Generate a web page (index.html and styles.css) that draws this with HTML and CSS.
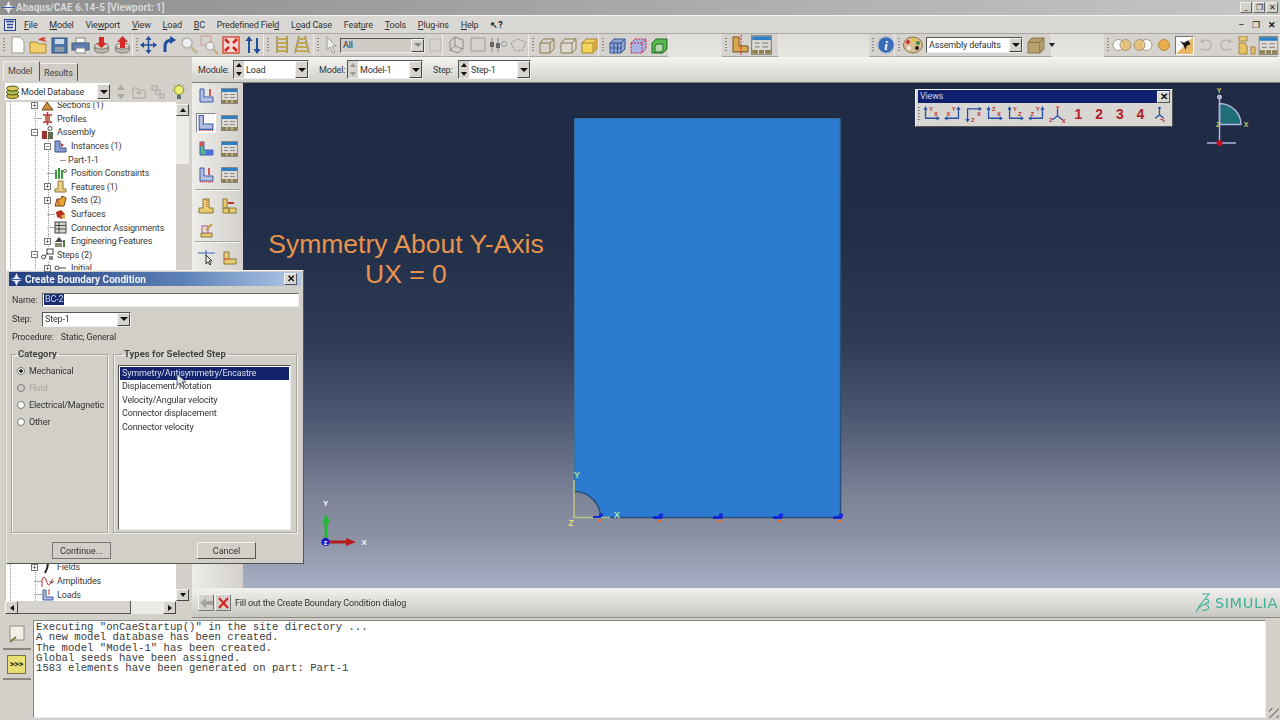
FILE: index.html
```html
<!DOCTYPE html>
<html lang="en">
<head>
    <meta charset="UTF-8">
    <title>Abaqus/CAE 6.14-5 [Viewport: 1]</title>
    <link rel="stylesheet" href="styles.css">
</head>
<body>
<svg class="defs" width="0" height="0">
    <symbol id="mgr" viewBox="0 0 17 16">
        <rect x=".5" y=".5" width="16" height="15" fill="#dcdad2" stroke="#8a887e"/>
        <rect x="1" y="1" width="15" height="3" fill="#2d7ec4"/>
        <path d="M3 6h4v1H3zM9 6h5v1H9zM3 9h4v1H3zM9 9h5v1H9z" fill="#8d8d8d"/>
        <path d="M1 12h15v3H1z" fill="#8c7f50"/>
        <path d="M6 12v3M11 12v3" stroke="#dcdad2"/>
    </symbol>
    <symbol id="lpart" viewBox="0 0 17 16">
        <path d="M2 1h4v8h9v5H2z" fill="#b4bfe0" stroke="#3b5da8"/>
    </symbol>
    <symbol id="cube" viewBox="0 0 17 17">
        <path d="M1 6l4-4h10v10l-4 4H1z M1 6h10v10 M11 6l4-4" fill="none" stroke="#8c7a4c"/>
    </symbol>
</svg>

<div class="app">
    <div class="titlebar">
        <svg class="title-icon" width="13" height="13" viewBox="0 0 13 13"><path d="M6.500 0l2 4.500 4.500 2-4.500 2-2 4.500-2-4.500-4.500-2 4.500-2z" fill="#e8e8f4"/><path d="M0 6.500h13" stroke="#3858a0"/></svg>
        <span class="title-text">Abaqus/CAE 6.14-5 [Viewport: 1]</span>
        <div class="win-btns">
            <span class="win-btn">_</span><span class="win-btn">&#10064;</span><span class="win-btn">&#10005;</span>
        </div>
    </div>

    <div class="menubar">
        <svg class="menu-icon" width="12" height="12" viewBox="0 0 12 12"><rect x=".5" y=".5" width="11" height="11" fill="#dfe4f4" stroke="#28448c"/><path d="M2 2.500h8M3 5.500h6M3 8.500h6" stroke="#28448c" stroke-width="1.500"/></svg>
        <nav class="menu-items">
            <span><u>F</u>ile</span><span><u>M</u>odel</span><span>Vie<u>w</u>port</span><span><u>V</u>iew</span><span><u>L</u>oad</span><span><u>B</u>C</span><span>Predefined Fiel<u>d</u></span><span>L<u>o</u>ad Case</span><span>Feat<u>u</u>re</span><span><u>T</u>ools</span><span><u>P</u>lug-ins</span><span><u>H</u>elp</span><span class="whatsthis">&#8598;?</span>
        </nav>
        <div class="mdi-btns"><span>&#8211;</span><span>&#10064;</span><b>&#10005;</b></div>
    </div>

    <div class="toolbars">
        <div class="tb tb-file">
            <i class="grip"></i>
            <svg width="21" height="20" viewBox="0 0 21 20"><path d="M5 2h8l4 4v12H5z" fill="#fcfcfa" stroke="#9a9a98"/></svg>
            <svg width="21" height="20" viewBox="0 0 21 20"><path d="M2 7h7l2 2h7v9H2z" fill="#f0cf6c" stroke="#a8883a"/><path d="M10 5q4-4 8-2l-2 1 3 3-4-1z" fill="#d8402c"/></svg>
            <svg width="21" height="20" viewBox="0 0 21 20"><rect x="3" y="3" width="15" height="15" fill="#4e78aa" stroke="#30507c"/><rect x="6" y="4" width="9" height="5" fill="#cfd8e6"/><rect x="6" y="12" width="9" height="5" fill="#8e9aa8"/></svg>
            <svg width="21" height="20" viewBox="0 0 21 20"><rect x="6" y="3" width="9" height="5" fill="#f4f4f4" stroke="#888"/><rect x="2" y="8" width="17" height="7" fill="#5a7fae" stroke="#4a5a78"/><rect x="6" y="13" width="9" height="5" fill="#fafafa" stroke="#888"/></svg>
            <svg width="21" height="20" viewBox="0 0 21 20"><ellipse cx="10.500" cy="15" rx="7" ry="3" fill="#bcb8ac" stroke="#85827a"/><path d="M3.500 11v4M17.500 11v4" stroke="#85827a"/><ellipse cx="10.500" cy="11" rx="7" ry="3" fill="#d4d0c8" stroke="#85827a"/><path d="M8 2h5v6h3l-5.500 5L5 8h3z" fill="#d42a2a"/></svg>
            <svg width="21" height="20" viewBox="0 0 21 20"><ellipse cx="10.500" cy="15" rx="7" ry="3" fill="#bcb8ac" stroke="#85827a"/><path d="M3.500 11v4M17.500 11v4" stroke="#85827a"/><ellipse cx="10.500" cy="11" rx="7" ry="3" fill="#d4d0c8" stroke="#85827a"/><path d="M8 13h5V7h3L10.500 1 5 7h3z" fill="#d42a2a"/></svg>
        </div>
        <div class="tb tb-view">
            <i class="grip"></i>
            <svg width="21" height="20" viewBox="0 0 21 20"><path d="M10.500 3v14M4 10h13" stroke="#1e4e9c" stroke-width="1.500"/><path d="M10.500 1l3 4h-6zM10.500 19l3-4h-6zM2 10l4-3v6zM19 10l-4-3v6z" fill="#1e4e9c"/></svg>
            <svg width="20" height="20" viewBox="0 0 20 20"><path d="M6 17V11q0-5 6-6" fill="none" stroke="#1e4e9c" stroke-width="3"/><path d="M11 1l6 4-6 4z" fill="#1e4e9c"/></svg>
            <svg width="20" height="20" viewBox="0 0 20 20"><circle cx="8" cy="8" r="5" fill="#eef0f4" stroke="#b4b4ae" stroke-width="1.500"/><path d="M12 12l6 6" stroke="#c0b48c" stroke-width="2.500"/></svg>
            <svg width="21" height="20" viewBox="0 0 21 20"><rect x="2" y="1" width="10" height="9" fill="none" stroke="#cf9a90"/><circle cx="11" cy="11" r="4" fill="#eef0f4" stroke="#b4b4ae" stroke-width="1.500"/><path d="M14 14l5 5" stroke="#c0b48c" stroke-width="2.500"/></svg>
            <svg width="23" height="20" viewBox="0 0 23 20"><rect x="3" y="2" width="16" height="16" fill="#f6d8d0" stroke="#d8503c" stroke-width="1.500"/><path d="M5 4l4 4M17 4l-4 4M5 16l4-4M17 16l-4-4" stroke="#d8261c" stroke-width="2.500"/></svg>
            <svg width="20" height="20" viewBox="0 0 20 20"><path d="M6 18V5M14 3v13" stroke="#1e4e9c" stroke-width="2"/><path d="M6 1l3.500 5h-7zM14 19l3.500-5h-7z" fill="#1e4e9c"/></svg>
        </div>
        <div class="tb tb-lad">
            <i class="grip"></i>
            <svg width="20" height="20" viewBox="0 0 20 20"><path d="M5 1v17M15 1v17" stroke="#9a8a50" stroke-width="1.500"/><path d="M5 4h10M5 8h10M5 12h10M5 16h10" stroke="#c0a850" stroke-width="2"/></svg>
            <svg width="20" height="20" viewBox="0 0 20 20"><path d="M7 1L3 18M13 1l4 17" stroke="#9a8a50" stroke-width="1.500"/><path d="M6 4h8M5 8h10M4 12h12M3 16h14" stroke="#c0a850" stroke-width="2"/></svg>
        </div>
        <div class="tb tb-select">
            <i class="grip"></i>
            <svg width="20" height="20" viewBox="0 0 20 20"><path d="M5 2v13l3-3 3 6 2-1-3-6h4z" fill="#eeeeea" stroke="#9c9c98"/></svg>
            <div class="combo combo-off"><span class="combo-field">All</span><span class="combo-arrow"></span></div>
            <svg class="shift" width="18" height="20" viewBox="0 0 18 20"><rect x="3" y="4" width="11" height="12" fill="none" stroke="#bbb"/></svg>
            <svg width="15" height="20" viewBox="0 0 15 20"><rect x="3" y="7" width="10" height="9" fill="#8a8a88"/></svg>
        </div>
        <div class="tb tb-sel2">
            <svg width="22" height="20" viewBox="0 0 22 20"><path d="M4 6l5-4 8 3v9l-5 4-8-3z M9 2v9l8 3M9 11l-5 4" fill="none" stroke="#8a8a88"/></svg>
            <svg width="20" height="20" viewBox="0 0 20 20"><path d="M3 3h14v13H3z" fill="none" stroke="#9c9c9a"/></svg>
            <svg width="20" height="20" viewBox="0 0 20 20"><path d="M4 3v14M10 3v14" stroke="#8a8a88"/><rect x="2" y="7" width="4" height="5" fill="#666"/><rect x="8" y="8" width="4" height="5" fill="#666"/><circle cx="16" cy="9" r="2.500" fill="none" stroke="#999"/></svg>
            <svg width="22" height="20" viewBox="0 0 22 20"><path d="M3 8l6-4 9 3-3 8-8 1z" fill="none" stroke="#9c9c9a" stroke-dasharray="3 1"/></svg>
        </div>
        <div class="tb tb-cube">
            <i class="grip"></i>
            <svg class="cube" viewBox="0 0 17 17"><use href="#cube"/></svg>
            <svg class="cube" viewBox="0 0 17 17"><path d="M1 6l4-4h11v10l-4 4H1z M1 6h11v10 M12 6l4-4" fill="#dedbd2" stroke="#8c7a4c"/></svg>
            <svg class="cube" viewBox="0 0 17 17"><path d="M1 6l4-4h11v10l-4 4H1z" fill="#f4d45c" stroke="#9c8432"/><path d="M1 6h11v10M12 6l4-4" fill="none" stroke="#9c8432"/><path d="M12 6l4-4v10l-4 4z" fill="#d8a83c"/></svg>
        </div>
        <div class="tb tb-mesh">
            <i class="grip"></i>
            <svg class="cube" viewBox="0 0 17 17"><path d="M1 6l4-4h11v10l-4 4H1z" fill="#8fa6d4" stroke="#34508c"/><path d="M1 6h11v10M12 6l4-4M5 6v10M8.500 6v10M1 11h11" fill="none" stroke="#34508c"/></svg>
            <svg class="cube" viewBox="0 0 17 17"><path d="M1 6l4-4h11v10l-4 4H1z" fill="#a8b6e4" stroke="#c8204c" stroke-dasharray="2 1"/><path d="M1 6h11v10M12 6l4-4" fill="none" stroke="#c8204c" stroke-dasharray="2 1"/></svg>
            <svg class="cube" viewBox="0 0 17 17"><path d="M1 6l4-4h11v10l-4 4H1z" fill="#56b84c" stroke="#2a6c2c"/><path d="M4 9l2-2h6v6l-2 2H4z" fill="#b4d8a8" stroke="#2a6c2c"/></svg>
        </div>
        <div class="tb tb-part">
            <i class="grip"></i>
            <svg width="21" height="20" viewBox="0 0 21 20"><path d="M3 2h6v9h9v6H3z" fill="#d8a84c" stroke="#6c5420"/><path d="M11 0v20" stroke="#d81c3c" stroke-dasharray="2 1"/></svg>
            <svg width="21" height="20" viewBox="0 0 17 16"><use href="#mgr"/></svg>
        </div>
        <div class="tb tb-info">
            <i class="grip"></i>
            <svg width="18" height="18" viewBox="0 0 18 18"><circle cx="9" cy="9" r="8" fill="#3c6cb8" stroke="#8ca8d4"/><text class="info-i" x="9" y="14" text-anchor="middle">i</text></svg>
        </div>
        <div class="tb tb-color">
            <i class="grip"></i>
            <svg width="20" height="18" viewBox="0 0 20 18"><ellipse cx="10" cy="9" rx="9.500" ry="8" fill="#d8bc94" stroke="#8c744c"/><circle cx="5" cy="6" r="2" fill="#d43030"/><circle cx="10" cy="4" r="2" fill="#e4c83c"/><circle cx="15" cy="7" r="2" fill="#3c8c3c"/><circle cx="14" cy="12" r="2" fill="#222"/><circle cx="6" cy="12" r="2" fill="#f0ece4"/></svg>
            <div class="combo combo-assembly"><span class="combo-field">Assembly defaults</span><span class="combo-arrow"></span></div>
            <svg class="cube-solid" width="18" height="18" viewBox="0 0 17 17"><path d="M1 6l4-4h11v10l-4 4H1z" fill="#b8a270" stroke="#8c7a4c"/><path d="M1 6h11v10M12 6l4-4" fill="none" stroke="#8c7a4c"/></svg>
            <i class="caret"></i>
        </div>
        <div class="tb tb-render">
            <i class="grip"></i>
            <svg class="r-wide" width="20" height="18" viewBox="0 0 20 18"><circle cx="6.500" cy="9" r="5.500" fill="#fafafa" stroke="#a89c7c"/><circle cx="13.500" cy="9" r="5.500" fill="#e8b860" fill-opacity=".7" stroke="#a89c7c"/></svg>
            <svg class="r-wide" width="20" height="18" viewBox="0 0 20 18"><circle cx="13.500" cy="9" r="5.500" fill="#fafafa" stroke="#a89c7c"/><circle cx="6.500" cy="9" r="5.500" fill="#e8b860" fill-opacity=".7" stroke="#a89c7c"/></svg>
            <svg width="20" height="18" viewBox="0 0 20 18"><circle cx="10" cy="9" r="5.500" fill="#e8ac4c" stroke="#b08c48"/></svg>
            <svg class="pin-active" width="19" height="19" viewBox="0 0 21 21"><rect width="21" height="21" fill="#fafafa"/><path d="M0 21L21 0v21z" fill="#e8b868"/><path d="M5 5l5 2 5-3 3 5-5 2-1 5-3-6z" fill="#181818"/></svg>
            <svg width="21" height="18" viewBox="0 0 21 18"><path d="M6 13q10 3 10-4t-9-4" fill="none" stroke="#b8b8b4" stroke-width="1.500"/><path d="M4 5l5-2v5z" fill="#b8b8b4"/></svg>
            <svg width="21" height="18" viewBox="0 0 21 18"><path d="M15 13Q5 16 5 9t9-4" fill="none" stroke="#b8b8b4" stroke-width="1.500"/><path d="M17 5l-5-2v5z" fill="#b8b8b4"/></svg>
            <svg width="21" height="19" viewBox="0 0 21 19"><rect x="2" y="0" width="8" height="5" fill="#e8c878" stroke="#a08844"/><path d="M2 7h6l2 3v8H2z" fill="#e8c060" stroke="#a08844"/><rect x="14" y="11" width="4" height="7" fill="#e8c060" stroke="#a08844"/></svg>
            <svg width="21" height="19" viewBox="0 0 17 16"><use href="#mgr"/></svg>
        </div>
    </div>

    <div class="middle">
        <aside class="sidebar">
            <div class="tabs">
                <span class="tab tab-active">Model</span><span class="tab">Results</span>
            </div>
            <div class="db-row">
                <div class="combo combo-db">
                    <svg width="13" height="14" viewBox="0 0 13 14"><ellipse cx="6.500" cy="11" rx="6" ry="2.500" fill="#d8b848" stroke="#4c4c20"/><ellipse cx="6.500" cy="7.500" rx="6" ry="2.500" fill="#a8c050" stroke="#4c4c20"/><ellipse cx="6.500" cy="3.500" rx="6" ry="2.500" fill="#d8c858" stroke="#4c4c20"/></svg>
                    <span class="combo-field">Model Database</span><span class="combo-arrow"></span>
                </div>
                <svg class="db-tool" width="12" height="16" viewBox="0 0 12 16"><path d="M6 1l4 5H2zM6 15l4-5H2z" fill="#aaa8a2"/></svg>
                <svg class="db-tool" width="14" height="14" viewBox="0 0 14 14"><path d="M1 3h4l1 2h7v8H1z" fill="none" stroke="#a8a69e"/><path d="M4 8h6M7 6v4" stroke="#a8a69e"/></svg>
                <svg class="db-tool" width="14" height="14" viewBox="0 0 14 14"><rect x="1" y="1" width="5" height="4" fill="none" stroke="#a8a69e"/><rect x="5" y="5" width="4" height="4" fill="none" stroke="#a8a69e"/><rect x="9" y="9" width="4" height="4" fill="none" stroke="#a8a69e"/></svg>
                <svg class="db-tool db-tip" width="14" height="16" viewBox="0 0 14 16"><circle cx="7" cy="6" r="4.500" fill="#eef070" stroke="#8c9030"/><rect x="5" y="11" width="4" height="4" fill="#5c6c78"/><path d="M0 6h1M13 6h1M7 0v1M2 1l1 1M12 1l-1 1" stroke="#8c9030"/></svg>
            </div>
            <div class="tree-box">
                <div class="tree">
                    <div class="row l1 first"><i class="exp">+</i><svg width="13" height="13" viewBox="0 0 13 13"><path d="M1 11l5-8 6 8z" fill="#c89040" stroke="#6c4820"/></svg><span>Sections (1)</span></div>
                    <div class="row l1"><i class="dash"></i><svg width="13" height="13" viewBox="0 0 13 13"><path d="M6.500 0v13M2 3h9M2 10h9" stroke="#b83030" stroke-width="1.500"/><rect x="4" y="4" width="5" height="5" fill="#c87060"/></svg><span>Profiles</span></div>
                    <div class="row l1"><i class="exp">&#8722;</i><svg width="13" height="13" viewBox="0 0 13 13"><rect x="1" y="5" width="5" height="8" fill="#9c3030"/><rect x="7" y="6" width="5" height="7" fill="#5c6c50"/><circle cx="9" cy="2.500" r="2" fill="none" stroke="#444"/></svg><span>Assembly</span></div>
                    <div class="row l2"><i class="exp">&#8722;</i><svg width="13" height="13" viewBox="0 0 13 13"><path d="M1 1h5v7h6v4H1z" fill="#8ca0d0" stroke="#34508c"/><path d="M7 3l3 2-3 2z" fill="#c83030"/></svg><span>Instances (1)</span></div>
                    <div class="row l3"><span>Part-1-1</span></div>
                    <div class="row l2"><i class="dash"></i><svg width="13" height="13" viewBox="0 0 13 13"><path d="M2 3v9M5 1v11M8 3v9" stroke="#3c9c3c" stroke-width="2"/><circle cx="11" cy="4" r="1.500" fill="none" stroke="#666"/></svg><span>Position Constraints</span></div>
                    <div class="row l2"><i class="exp">+</i><svg width="13" height="13" viewBox="0 0 13 13"><path d="M4 1h5v8h3v3H1V9h3z" fill="#e8d088" stroke="#8c7838"/></svg><span>Features (1)</span></div>
                    <div class="row l2"><i class="exp">+</i><svg width="13" height="13" viewBox="0 0 13 13"><path d="M1 12l2-7h4l1-3 4 2-2 8z" fill="#e8a830" stroke="#6c4820"/><path d="M3 5l3 7" stroke="#c83030"/></svg><span>Sets (2)</span></div>
                    <div class="row l2"><i class="dash"></i><svg width="13" height="13" viewBox="0 0 13 13"><path d="M2 4l5-2 4 4-3 5-5-2z" fill="#b83024"/><path d="M6 8l5-2v5z" fill="#d8b040"/></svg><span>Surfaces</span></div>
                    <div class="row l2"><i class="dash"></i><svg width="13" height="13" viewBox="0 0 13 13"><rect x="1" y="1" width="11" height="11" fill="#d8d8d0" stroke="#444"/><path d="M1 4.500h11M1 8h11M5 1v11" stroke="#444"/></svg><span>Connector Assignments</span></div>
                    <div class="row l2"><i class="exp">+</i><svg width="13" height="13" viewBox="0 0 13 13"><path d="M1 7l4-5 4 5z" fill="#444"/><rect x="1" y="8" width="7" height="4" fill="#8c8c70"/><path d="M10 5v7" stroke="#4c7c3c" stroke-width="2"/></svg><span>Engineering Features</span></div>
                    <div class="row l1"><i class="exp">&#8722;</i><svg width="13" height="13" viewBox="0 0 13 13"><circle cx="2.500" cy="9" r="2" fill="none" stroke="#444"/><path d="M4 8l3-3" stroke="#444"/><rect x="6" y="1" width="6" height="5" fill="none" stroke="#444"/><rect x="8" y="8" width="4" height="4" fill="#888"/></svg><span>Steps (2)</span></div>
                    <div class="row l2"><i class="exp">+</i><svg width="13" height="13" viewBox="0 0 13 13"><circle cx="3" cy="6" r="2" fill="none" stroke="#444"/><path d="M5 6h7" stroke="#444"/></svg><span>Initial</span></div>
                    <div class="tree-gap"></div>
                    <div class="row l1"><i class="exp">+</i><svg width="13" height="13" viewBox="0 0 13 13"><path d="M4 12q3-5 3-10h4" fill="none" stroke="#222" stroke-width="2"/></svg><span>Fields</span></div>
                    <div class="row l1"><i class="dash"></i><svg width="13" height="13" viewBox="0 0 13 13"><path d="M1 12V5q2-6 4 0t3 5 4-6" fill="none" stroke="#b83030"/><path d="M9 6q2 4 4 0" fill="none" stroke="#445"/></svg><span>Amplitudes</span></div>
                    <div class="row l1"><i class="dash"></i><svg width="13" height="13" viewBox="0 0 13 13"><path d="M2 2h3v7h7v3H2z" fill="#b4bfe0" stroke="#3b5da8"/><path d="M8 1v6" stroke="#c83030"/></svg><span>Loads</span></div>
                </div>
                <div class="vscroll">
                    <i class="sb-btn sb-up"></i><i class="sb-top"></i><i class="sb-rest"></i><i class="sb-btn sb-down"></i>
                </div>
            </div>
            <div class="hscroll">
                <i class="sb-btn sb-left"></i><i class="sb-thumb"></i><i class="sb-track"></i><i class="sb-btn sb-right"></i><i class="sb-corner"></i>
            </div>
        </aside>

        <div class="work">
            <div class="context">
                <label class="lbl-module">Module:</label>
                <div class="combo combo-ctx"><span class="spin"></span><span class="combo-field">Load</span><span class="combo-arrow"></span></div>
                <label class="lbl-model">Model:</label>
                <div class="combo combo-ctx"><span class="spin spin-off"></span><span class="combo-field">Model-1</span><span class="combo-arrow"></span></div>
                <label class="lbl-step">Step:</label>
                <div class="combo combo-ctx combo-step"><span class="spin"></span><span class="combo-field">Step-1</span><span class="combo-arrow"></span></div>
            </div>
            <div class="work-row">
                <div class="toolbox">
                    <div class="tool-pair"><svg class="t" viewBox="0 0 17 16"><use href="#lpart"/><path d="M12 1v7" stroke="#c83030" stroke-width="1.500"/></svg><svg class="t" viewBox="0 0 17 16"><use href="#mgr"/></svg></div>
                    <div class="tool-pair"><svg class="t t-on" viewBox="0 0 17 16"><use href="#lpart"/><path d="M2 15h13" stroke="#c83030" stroke-dasharray="1 1"/></svg><svg class="t" viewBox="0 0 17 16"><use href="#mgr"/></svg></div>
                    <div class="tool-pair"><svg class="t" viewBox="0 0 17 16"><path d="M2 1h4v8h9v5H2z" fill="#50b890" stroke="#3b5da8"/><path d="M2 1h4v4H2z" fill="#d85050"/><path d="M8 9h7v5H8z" fill="#4c70d8"/></svg><svg class="t" viewBox="0 0 17 16"><use href="#mgr"/></svg></div>
                    <div class="tool-pair"><svg class="t" viewBox="0 0 17 16"><use href="#lpart"/><path d="M11 1v7" stroke="#c83030" stroke-width="1.500"/><path d="M2 15h13" stroke="#c83030" stroke-dasharray="1 1"/></svg><svg class="t" viewBox="0 0 17 16"><use href="#mgr"/></svg></div>
                    <div class="tool-sep"></div>
                    <div class="tool-pair"><svg class="t" viewBox="0 0 17 16"><path d="M5 1h6v9h4v5H1v-5h4z" fill="#e8cc70" stroke="#8c7838"/><path d="M9 2v7" stroke="#c83030" stroke-dasharray="1 1"/></svg><svg class="t" viewBox="0 0 17 16"><path d="M2 1h4v9h-4zM8 10h7v5H8zM2 10h6v5H2z" fill="#e8cc70" stroke="#8c7838"/><path d="M7 5h6" stroke="#c83030" stroke-width="2"/></svg></div>
                    <div class="tool-pair tool-one"><svg class="t" viewBox="0 0 17 16"><path d="M3 11h11v4H3z" fill="#e8cc70" stroke="#8c7838"/><rect x="4" y="4" width="6" height="7" fill="#e8d8e0" stroke="#a06080"/><path d="M8 8l6-6" stroke="#c8a040" stroke-width="2"/></svg></div>
                    <div class="tool-sep"></div>
                    <div class="tool-pair"><svg class="t" viewBox="0 0 17 16"><path d="M0 3h5M11 3h6M8 0v6M5 3h6" stroke="#3c68b8"/><path d="M8 5v9l2-2 2 3 1-1-2-3h3z" fill="#e8e8e4" stroke="#333"/></svg><svg class="t" viewBox="0 0 17 16"><path d="M3 2h5v7h7v5H3z" fill="#e8cc70" stroke="#8c7838"/><path d="M3 9h5" stroke="#c83030"/></svg></div>
                </div>

                <div class="viewport">
                    <svg class="model" width="1037" height="505" viewBox="243 83 1037 505">
                        <!-- part -->
                        <path d="M574.500 118.500H840.500V517.500H600.500A26 26 0 0 0 574.500 491.500Z" fill="#2b7bd0"/>
                        <path d="M840.500 118.500V517.500H600.500A26 26 0 0 0 574.500 491.500" fill="none" stroke="#2a4f78" stroke-width="1.500"/>
                        <path d="M574.500 118.500H840.500M574.500 118.500V491" fill="none" stroke="#3b6a9c"/>
                        <!-- csys at the corner -->
                        <path d="M574 480V517.500H610" fill="none" stroke="#bfc77c" stroke-width="1.500"/>
                        <!-- constraint symbols along the bottom edge -->
                        <g id="bc-mark">
                            <path d="M593 517h8" stroke="#1428d8" stroke-width="2"/><circle cx="601" cy="515" r="2" fill="#1428d8"/><path d="M598 520.500h4" stroke="#e07030" stroke-width="2"/>
                            <path d="M653 517.500h9" stroke="#1428d8" stroke-width="3"/><circle cx="661" cy="515.500" r="2.200" fill="#1428d8"/><path d="M658 521h4" stroke="#e07030" stroke-width="2"/>
                            <path d="M713 517.500h9" stroke="#1428d8" stroke-width="3"/><circle cx="721" cy="515.500" r="2.200" fill="#1428d8"/><path d="M718 521h4" stroke="#e07030" stroke-width="2"/>
                            <path d="M773 517.500h9" stroke="#1428d8" stroke-width="3"/><circle cx="781" cy="515.500" r="2.200" fill="#1428d8"/><path d="M778 521h4" stroke="#e07030" stroke-width="2"/>
                            <path d="M833 517.500h9" stroke="#1428d8" stroke-width="3"/><circle cx="841" cy="515.500" r="2.200" fill="#1428d8"/><path d="M838 521h4" stroke="#e07030" stroke-width="2"/>
                        </g>
                        <text class="ax ax-y" x="577" y="478">Y</text>
                        <text class="ax ax-x" x="617" y="518">X</text>
                        <text class="ax ax-z" x="571" y="526">Z</text>
                        <!-- global triad -->
                        <path d="M326 541V522" stroke="#22b830" stroke-width="3"/><path d="M326 514l4 9h-8z" fill="#22b830"/>
                        <path d="M329 542h18" stroke="#b41c1c" stroke-width="3"/><path d="M356 542l-10-4v8z" fill="#b41c1c"/>
                        <circle cx="325.500" cy="542" r="4" fill="#1a1ac8"/>
                        <text class="tri tri-z" x="325.500" y="544.500">z</text>
                        <text class="tri" x="325.500" y="506">Y</text>
                        <text class="tri" x="364" y="545">X</text>
                        <!-- view triad, top right -->
                        <path d="M1219.500 103.500A22 21 0 0 1 1241 124.500H1219.500Z" fill="#1e6e78" stroke="#b4b0e0" stroke-width="1.500"/>
                        <path d="M1219.500 97V143" stroke="#b4b0e0" stroke-width="1.500"/>
                        <path d="M1207 143h29" stroke="#b4b0e0" stroke-width="1.500"/>
                        <circle cx="1219.500" cy="97" r="2.500" fill="#b4b0e0"/>
                        <circle cx="1219.500" cy="143" r="3" fill="#c80c1c"/>
                        <text class="ax-sm" x="1219" y="92.500">Y</text>
                        <text class="ax-sm" x="1246" y="127">X</text>
                        <text class="ax-sm" x="1218" y="127">Z</text>
                    </svg>
                    <div class="annotation">Symmetry About Y-Axis<br>UX = 0</div>
                </div>
            </div>
            <div class="prompt">
                <span class="p-btn"><svg width="13" height="12" viewBox="0 0 13 12"><path d="M0 6l6-5v3h7v4H6v3z" fill="#a4a4a0"/></svg></span>
                <span class="p-btn"><svg width="11" height="12" viewBox="0 0 11 12"><path d="M1 1l9 10M10 1L1 11" stroke="#d82020" stroke-width="2"/></svg></span>
                <span class="p-text">Fill out the Create Boundary Condition dialog</span>
                <div class="simulia">
                    <svg width="20" height="20" viewBox="0 0 20 20"><path d="M8 1h7l-4 5q5 0 3 4M11 6l-5 6-4 7q3-6 9-8M15 10q-5-1-3 2 4 1 2 4-3 2-6 1" fill="none" stroke="#3fae9c" stroke-width="1.100"/></svg>
                    <span>SIMULIA</span>
                </div>
            </div>
        </div>
    </div>

    <div class="messages">
        <div class="msg-side">
            <span class="msg-tab"><svg width="16" height="18" viewBox="0 0 16 18"><rect x="1" y="1" width="14" height="14" fill="#f0efe8" stroke="#8c8c84"/><path d="M1 17l6-5" stroke="#7c7c40" stroke-width="2"/></svg></span>
            <span class="msg-tab msg-tab-on"><b>&gt;&gt;&gt;</b></span>
        </div>
        <pre class="msg-text">Executing "onCaeStartup()" in the site directory ...
A new model database has been created.
The model "Model-1" has been created.
Global seeds have been assigned.
1583 elements have been generated on part: Part-1</pre>
        <i class="grip-corner"></i>
    </div>

    <!-- floating windows -->
    <div class="views">
        <div class="views-title"><span>Views</span><i class="x-btn">&#10005;</i></div>
        <div class="views-row">
            <i class="grip"></i>
            <svg class="v" viewBox="0 0 20 20"><path d="M3 4v11h14" fill="none" stroke="#2450a4" stroke-width="1.500"/><path d="M3 1l2.500 4h-5zM20 15l-4-2.500v5z" fill="#2450a4"/><text x="7" y="7">Y</text><text x="13" y="12">X</text></svg>
            <svg class="v" viewBox="0 0 20 20"><path d="M17 4v11H3" fill="none" stroke="#2450a4" stroke-width="1.500"/><path d="M17 1l2.500 4h-5zM0 15l4-2.500v5z" fill="#2450a4"/><text x="9" y="7">Y</text><text x="3" y="12">X</text></svg>
            <svg class="v" viewBox="0 0 20 20"><path d="M3 16V4h13" fill="none" stroke="#2450a4" stroke-width="1.500"/><path d="M3 20l2.500-4h-5zM20 4l-4-2.500v5z" fill="#2450a4"/><text x="7" y="19">Z</text><text x="14" y="12">X</text></svg>
            <svg class="v" viewBox="0 0 20 20"><path d="M3 4v11h14" fill="none" stroke="#2450a4" stroke-width="1.500"/><path d="M3 1l2.500 4h-5zM20 15l-4-2.500v5z" fill="#2450a4"/><text x="7" y="7">Z</text><text x="13" y="12">X</text></svg>
            <svg class="v" viewBox="0 0 20 20"><path d="M3 4v11h14" fill="none" stroke="#2450a4" stroke-width="1.500"/><path d="M3 1l2.500 4h-5zM20 15l-4-2.500v5z" fill="#2450a4"/><text x="7" y="7">Y</text><text x="13" y="12">Z</text></svg>
            <svg class="v" viewBox="0 0 20 20"><path d="M17 4v11H3" fill="none" stroke="#2450a4" stroke-width="1.500"/><path d="M17 1l2.500 4h-5zM0 15l4-2.500v5z" fill="#2450a4"/><text x="9" y="7">Y</text><text x="3" y="12">Z</text></svg>
            <svg class="v" viewBox="0 0 20 20"><path d="M10 4v8L4 17M10 12l6 5" fill="none" stroke="#2450a4" stroke-width="1.500"/><text x="8" y="5">Y</text><text x="0" y="19">Z</text><text x="15" y="20">X</text></svg>
            <b class="vn">1</b><b class="vn">2</b><b class="vn">3</b><b class="vn">4</b>
            <svg class="v" viewBox="0 0 20 20"><path d="M10 3v8L5 15M10 11l5 4" fill="none" stroke="#2450a4" stroke-width="1.500"/><circle cx="10" cy="3" r="1.500" fill="#2450a4"/><path d="M11 16q3 0 5 3" fill="none" stroke="#c83030" stroke-width="1.500"/></svg>
        </div>
    </div>

    <div class="dialog">
        <div class="dlg-title">
            <svg width="13" height="13" viewBox="0 0 13 13"><path d="M6.500 0l2 4.500 4.500 2-4.500 2-2 4.500-2-4.500-4.500-2 4.500-2z" fill="#e8e8f4"/><path d="M0 6.500h13" stroke="#3858a0"/></svg>
            <span>Create Boundary Condition</span>
            <i class="x-btn">&#10005;</i>
        </div>
        <div class="dlg-name">
            <label>Name:</label>
            <div class="dlg-input"><span class="sel-text">BC-2</span></div>
        </div>
        <div class="dlg-step">
            <label>Step:</label>
            <div class="combo combo-dlg"><span class="combo-field">Step-1</span><span class="combo-arrow"></span></div>
        </div>
        <div class="dlg-proc"><span>Procedure:</span><span>Static, General</span></div>
        <div class="dlg-groups">
            <fieldset class="grp grp-cat">
                <legend>Category</legend>
                <div class="radio radio-on">Mechanical</div>
                <div class="radio radio-off">Fluid</div>
                <div class="radio">Electrical/Magnetic</div>
                <div class="radio">Other</div>
            </fieldset>
            <fieldset class="grp grp-types">
                <legend>Types for Selected Step</legend>
                <ul class="type-list">
                    <li class="type-sel">Symmetry/Antisymmetry/Encastre</li>
                    <li>Displacement/Rotation</li>
                    <li>Velocity/Angular velocity</li>
                    <li>Connector displacement</li>
                    <li>Connector velocity</li>
                </ul>
            </fieldset>
        </div>
        <div class="dlg-actions">
            <button class="btn btn-default">Continue...</button>
            <button class="btn">Cancel</button>
        </div>
        <svg class="cursor" width="11" height="15" viewBox="0 0 11 15"><path d="M1 1v11l3-2 2 4 2-1-2-4h4z" fill="#e8e8ec" stroke="#444a60" stroke-width=".8"/></svg>
    </div>
</div>
</body>
</html>
```

FILE: styles.css
```css
html, body {
    margin: 0;
    height: 100%;
    overflow: hidden;
}
body {
    background: #d4d1cb;
}
.defs {
    position: absolute;
}
.app {
    width: 1280px;
    height: 720px;
    display: flex;
    flex-direction: column;
    position: relative;
    overflow: hidden;
    font-family: Roboto, "Liberation Sans", sans-serif;
    font-size: 9px;
    letter-spacing: -.15px;
    color: #333;
    filter: blur(.35px);
}

/* title and menu */
.titlebar {
    height: 15px;
    flex: none;
    display: flex;
    align-items: center;
    padding-left: 2px;
    background: linear-gradient(90deg, #8f8f8f, #a6a6a6 45%, #c6c6c4);
    border-bottom: 1px solid #f4f4f2;
}
.title-text {
    margin-left: 1px;
    color: #d8d8d8;
    font-weight: 700;
    font-size: 10px;
    letter-spacing: 0;
}
.win-btns {
    margin-left: auto;
    margin-right: 2px;
    display: flex;
    gap: 1px;
}
.win-btn {
    width: 12px;
    height: 11px;
    line-height: 10px;
    text-align: center;
    font-size: 8px;
    color: #222;
    background: #d4d1cb;
    border: 1px solid;
    border-color: #f0f0f0 #666 #666 #f0f0f0;
    box-sizing: border-box;
}
.menubar {
    height: 17px;
    flex: none;
    display: flex;
    align-items: center;
    padding-left: 4px;
    background: #dad8d4;
    border-bottom: 1px solid #a9a8a4;
}
.menu-items {
    display: flex;
    gap: 11.800px;
    margin-left: 8px;
}
.whatsthis {
    color: #222;
    font-weight: 700;
}
.mdi-btns {
    margin-left: auto;
    margin-right: 4px;
    display: flex;
    gap: 8px;
    font-size: 9px;
    color: #111;
}

/* toolbars */
.toolbars {
    height: 23px;
    flex: none;
    display: flex;
    background: linear-gradient(#dfddd9, #e8e6e3);
}
.tb {
    display: flex;
    align-items: center;
    height: 22px;
    background: #d6d3ce;
    border-bottom: 1px solid #a8a6a0;
    border-right: 1px solid #ecebe8;
    flex: none;
}
.grip {
    display: block;
    width: 2px;
    height: 14px;
    margin: 0 3px;
    flex: none;
    background: repeating-linear-gradient(#8a8880 0 1px, transparent 1px 3px);
}
.tb-file { width: 132px; }
.tb-file .grip { margin-right: 2px; }
.tb-view { width: 130px; }
.tb-view .grip { margin-right: 0; }
.tb-lad { width: 49px; }
.tb-select { width: 128px; }
.tb-sel2 { width: 82px; padding-left: 3px; }
.tb-cube { width: 69px; }
.tb-mesh { width: 69px; }
.tb-part { width: 56px; margin-left: 53px; }
.tb-info { width: 25px; margin-left: 90px; }
.tb-color { width: 156px; }
.tb-render { width: 174px; margin-left: 52px; }
.tb svg { flex: none; }
.tb-cube .grip, .tb-mesh .grip { margin-right: 5px; }
.r-wide { margin-right: 1px; }
svg.cube {
    width: 17px;
    height: 17px;
    margin-right: 4px;
}
.info-i {
    fill: #fff;
    font: italic 700 13px "Liberation Serif", serif;
}
.caret {
    width: 0;
    height: 0;
    margin-left: 4px;
    border: 3px solid transparent;
    border-top: 4px solid #222;
    border-bottom: 0;
}
.cube-solid {
    margin-left: 4px;
}
.pin-active {
    margin: 0 1px;
    border: 1px solid;
    border-color: #777 #fff #fff #777;
    box-sizing: border-box;
}

/* combos */
.combo {
    display: flex;
    align-items: stretch;
    box-sizing: border-box;
    background: #fff;
    border: 1px solid;
    border-color: #555 #eee #eee #555;
    flex: none;
}
.combo-field {
    flex: 1;
    padding-left: 2px;
    display: flex;
    align-items: center;
    white-space: nowrap;
}
.combo-arrow {
    width: 13px;
    flex: none;
    background: #d6d3ce;
    border: 1px solid;
    border-color: #f4f4f4 #444 #444 #f4f4f4;
    box-sizing: border-box;
    position: relative;
}
.combo-arrow::after {
    content: "";
    position: absolute;
    left: 2px;
    top: 50%;
    margin-top: -2px;
    border: 4px solid transparent;
    border-top: 4px solid #111;
    border-bottom: 0;
}
.combo-off { width: 85px; height: 15px; background: #cfccc6; margin: 0 2px 0 -2px; }
.combo-off .combo-arrow::after { border-top-color: #888; }
.combo-assembly { width: 97px; height: 16px; margin-left: 3px; }
.combo-db { width: 105px; height: 17px; align-items: center; padding-left: 1px; border: 0; }
.combo-db .combo-arrow { height: 15px; }
.combo-ctx { width: 76px; height: 19px; }
.combo-step { width: 73px; }
.combo-dlg { width: 89px; height: 15px; }

/* sidebar */
.middle {
    flex: 1;
    display: flex;
    min-height: 0;
}
.sidebar {
    width: 192px;
    flex: none;
    display: flex;
    flex-direction: column;
    background: #d4d1cb;
    box-sizing: border-box;
    padding: 0 3px 4px 5px;
}
.tabs {
    height: 24px;
    display: flex;
    align-items: flex-end;
    margin-left: -2px;
    flex: none;
}
.tab {
    padding: 0 4px;
    height: 17px;
    line-height: 18px;
    border-right: 1px solid #555;
    border-top: 1px solid #eee;
    color: #444;
    background: #d0cdc7;
}
.tab-active {
    width: 27px;
    height: 19px;
    border-left: 1px solid #eee;
    background: #d8d5d0;
}
.db-row {
    height: 21px;
    flex: none;
    display: flex;
    align-items: center;
}
.db-tool {
    margin-left: 5px;
}
.db-tip {
    margin-left: 7px;
}
.tree-box {
    flex: 1;
    display: flex;
    min-height: 0;
    background: #fff;
    border-left: 1px solid #c4c2bc;
}
.tree {
    flex: 1;
    overflow: hidden;
    background:
        repeating-linear-gradient(#999 0 1px, transparent 1px 2px) 4px 0 / 1px 100% no-repeat,
        repeating-linear-gradient(#999 0 1px, transparent 1px 2px) 29px 0 / 1px 100% no-repeat;
}
.row {
    height: 13.600px;
    display: flex;
    align-items: center;
    white-space: nowrap;
    color: #3a3a3a;
}
.row svg {
    flex: none;
    margin-right: 3px;
}
.first {
    margin-top: -3.500px;
}
.l1 { padding-left: 25px; }
.l2 {
    padding-left: 38px;
    background: repeating-linear-gradient(#999 0 1px, transparent 1px 2px) 42px 0 / 1px 100% no-repeat;
}
.l2 svg { margin-right: 4px; }
.l3 {
    padding-left: 62px;
    background:
        repeating-linear-gradient(#999 0 1px, transparent 1px 2px) 42px 0 / 1px 100% no-repeat,
        linear-gradient(#999, #999) 54px 7px / 6px 1px no-repeat;
}
.exp {
    width: 7px;
    height: 7px;
    margin-right: 3px;
    flex: none;
    box-sizing: border-box;
    border: 1px solid #777;
    background: #fff;
    font: 7px/5px "Liberation Sans", sans-serif;
    text-align: center;
    color: #222;
    position: relative;
    z-index: 1;
}
.dash {
    width: 8px;
    height: 1px;
    margin-left: 3px;
    margin-right: -1px;
    flex: none;
    background: #aaa;
}
.tree-gap {
    height: 285.400px;
}
.vscroll {
    width: 13px;
    flex: none;
    display: flex;
    flex-direction: column;
    padding-top: 2px;
    background: #d4d1cb;
}
.sb-btn {
    display: block;
    flex: none;
    box-sizing: border-box;
    background: #d6d3ce;
    border: 1px solid;
    border-color: #f4f4f4 #444 #444 #f4f4f4;
    position: relative;
}
.sb-btn::after {
    content: "";
    position: absolute;
    left: 50%;
    top: 50%;
    border: 3px solid transparent;
    transform: translate(-50%, -50%);
}
.vscroll .sb-btn {
    height: 12px;
}
.sb-up::after { border-bottom: 4px solid #111; border-top: 0; }
.sb-down::after { border-top: 4px solid #111; border-bottom: 0; }
.sb-left::after { border-right: 4px solid #111; border-left: 0; }
.sb-right::after { border-left: 4px solid #111; border-right: 0; }
.sb-top {
    display: block;
    height: 48px;
    background: #ecebe8;
}
.sb-rest {
    display: block;
    flex: 1;
    background: #d4d1cb;
}
.hscroll {
    height: 13px;
    flex: none;
    display: flex;
}
.hscroll .sb-btn {
    width: 13px;
}
.sb-thumb {
    width: 114px;
    box-sizing: border-box;
    background: #d6d3ce;
    border-right: 1px solid #555;
    border-bottom: 1px solid #555;
}
.sb-track {
    width: 33px;
    background: #ecebe8;
}
.sb-corner {
    width: 13px;
    background: #d4d1cb;
}

/* context bar and workspace */
.work {
    flex: 1;
    display: flex;
    flex-direction: column;
    min-width: 0;
}
.context {
    height: 25px;
    flex: none;
    display: flex;
    align-items: center;
    padding-left: 6px;
    background: linear-gradient(#f5f4f2, #d2d0ca);
    border-bottom: 1px solid #7f7e7a;
}
.context label {
    flex: none;
    white-space: nowrap;
}
.lbl-module { width: 35px; }
.lbl-model { width: 28px; margin-left: 10px; }
.lbl-step { width: 25px; margin-left: 10px; }
.spin {
    width: 10px;
    flex: none;
    background: #d6d3ce;
    position: relative;
}
.spin::before, .spin::after {
    content: "";
    position: absolute;
    left: 2px;
    border: 3px solid transparent;
}
.spin::before { top: 2px; border-bottom: 4px solid #111; border-top: 0; }
.spin::after { bottom: 2px; border-top: 4px solid #111; border-bottom: 0; }
.spin-off::before { border-bottom-color: #999; }
.spin-off::after { border-top-color: #999; }
.work-row {
    flex: 1;
    display: flex;
    min-height: 0;
}
.toolbox {
    width: 51px;
    flex: none;
    box-sizing: border-box;
    padding: 0 2px 0 6px;
    background: linear-gradient(90deg, #eeedea, #d3d0cb);
}
.tool-pair {
    display: flex;
    gap: 6px;
    height: 26.400px;
    align-items: center;
}
.tool-one { height: 22px; }
.t {
    width: 17px;
    height: 16px;
    flex: none;
}
.t-on {
    width: 20px;
    height: 20px;
    margin: 0 -1px 0 -2px;
    background: #fafafa;
    border: 1px solid;
    border-color: #888 #fff #fff #888;
    box-sizing: border-box;
}
.tool-sep {
    height: 0;
    margin: 0 0 2px -3px;
    border-top: 1px solid #a8a6a0;
    border-bottom: 1px solid #f4f4f2;
}
.viewport {
    flex: 1;
    position: relative;
    overflow: hidden;
    background: linear-gradient(#1f2b44 0, #212e48 30%, #2f3c58 52%, #515c75 68%, #7d8498 82%, #8c92a4 90%, #a5afc4 100%);
}
.model {
    position: absolute;
    left: 0;
    top: 0;
}
.ax {
    font: 700 9px "Liberation Sans", sans-serif;
    text-anchor: middle;
}
.ax-y { fill: #a8e0a0; }
.ax-x { fill: #a8e8b0; }
.ax-z { fill: #e0e070; }
.ax-sm {
    font: 700 7px "Liberation Sans", sans-serif;
    fill: #c8c860;
    text-anchor: middle;
}
.tri {
    font: 700 8px "Liberation Sans", sans-serif;
    fill: #f4f4f4;
    text-anchor: middle;
}
.tri-z { font-size: 7px; }
.annotation {
    position: absolute;
    left: 0;
    top: 147px;
    width: 326px;
    text-align: center;
    font: 26.500px/29.500px "Liberation Sans", sans-serif;
    letter-spacing: 0;
    color: #e8924c;
}

/* prompt */
.prompt {
    height: 30px;
    flex: none;
    display: flex;
    align-items: center;
    padding-left: 6px;
    background: linear-gradient(#f2f1ee, #c9c7c1);
    border-bottom: 1px solid #8c8b86;
    box-sizing: border-box;
}
.p-btn {
    width: 16px;
    height: 17px;
    margin-right: 1px;
    display: flex;
    align-items: center;
    justify-content: center;
    background: #d4d1cb;
    border: 1px solid;
    border-color: #f4f4f4 #777 #777 #f4f4f4;
    box-sizing: border-box;
}
.p-text {
    margin-left: 3px;
}
.simulia {
    margin-left: auto;
    margin-right: 2px;
    display: flex;
    align-items: center;
    gap: 1px;
    color: #3fae9c;
    font: 14.500px "DejaVu Sans", sans-serif;
    letter-spacing: .6px;
}

/* messages */
.messages {
    height: 102px;
    flex: none;
    display: flex;
    background: #d4d1cb;
    padding: 2px 14px 2px 0;
    box-sizing: border-box;
    position: relative;
}
.msg-side {
    width: 33px;
    flex: none;
    display: flex;
    flex-direction: column;
    align-items: center;
    box-sizing: border-box;
}
.msg-tab {
    width: 28px;
    height: 30px;
    display: flex;
    align-items: center;
    justify-content: center;
    border-bottom: 2px solid #8a8882;
    box-sizing: border-box;
}
.msg-tab-on b {
    width: 19px;
    height: 19px;
    line-height: 17px;
    text-align: center;
    font-size: 9px;
    color: #222;
    background: #eadf74;
    border: 1px solid #77724a;
    box-sizing: border-box;
}
.msg-text {
    flex: 1;
    margin: 0;
    padding: 1px 2px;
    background: #fff;
    border: 1px solid;
    border-color: #8a8882 #eee #eee #8a8882;
    font: 10.630px/10.350px "Liberation Mono", monospace;
    letter-spacing: 0;
    color: #3a3a3a;
    box-sizing: border-box;
}
.grip-corner {
    position: absolute;
    right: 1px;
    bottom: 2px;
    width: 10px;
    height: 10px;
    background: repeating-linear-gradient(135deg, transparent 0 2px, #8a8882 2px 3px, transparent 3px 5px);
}

/* Views palette */
.views {
    position: absolute;
    left: 915px;
    top: 89px;
    width: 258px;
    height: 38px;
    box-sizing: border-box;
    padding: 0 2px 1px;
    background: #d8d6d2;
    border: 1px solid;
    border-color: #f4f4f4 #555 #555 #f4f4f4;
}
.views-title {
    height: 13px;
    display: flex;
    align-items: center;
    justify-content: space-between;
    padding-left: 2px;
    color: #d0d4e8;
    background: #10206c;
    line-height: 1;
}
.x-btn {
    width: 13px;
    height: 12px;
    font: 700 10px/10px "Liberation Sans", sans-serif;
    text-align: center;
    color: #111;
    background: #d8d6d2;
    box-sizing: border-box;
    border: 1px solid;
    border-color: #f4f4f4 #555 #555 #f4f4f4;
}
.views-row {
    display: flex;
    align-items: center;
    height: 22px;
}
.views-row .grip {
    margin: 0 3px 0 0;
}
.v {
    width: 17px;
    height: 18px;
    margin-right: 4px;
    flex: none;
}
.v text {
    font: 700 7px "Liberation Sans", sans-serif;
    fill: #c02c2c;
}
.vn {
    width: 20.700px;
    flex: none;
    text-align: center;
    font: 700 14px "Liberation Sans", sans-serif;
    color: #b5202a;
}
.views-row .vn:first-of-type {
    margin-left: -2px;
}

/* dialog */
.dialog {
    position: absolute;
    left: 6px;
    top: 270px;
    width: 298px;
    height: 294px;
    box-sizing: border-box;
    padding: 1px 2px 2px;
    background: #d2cfc9;
    border: 1px solid;
    border-color: #f0efec #55544f #55544f #f0efec;
    display: flex;
    flex-direction: column;
}
.dlg-title {
    height: 14px;
    flex: none;
    display: flex;
    align-items: center;
    padding: 0 4px 0 1px;
    background: linear-gradient(90deg, #233e7e, #5d82b8 60%, #b0c8e6);
    color: #eef2f8;
    font-weight: 700;
    font-size: 10px;
    letter-spacing: 0;
    gap: 2px;
}
.dlg-title .x-btn {
    margin-left: auto;
}
.dlg-name {
    display: flex;
    align-items: center;
    height: 15px;
    margin-top: 6px;
    padding-left: 3px;
}
.dlg-name label, .dlg-step label {
    width: 30px;
    flex: none;
}
.dlg-input {
    width: 257px;
    height: 14px;
    box-sizing: border-box;
    background: #fff;
    border: 1px solid;
    border-color: #666 #eee #eee #666;
    display: flex;
    align-items: center;
    padding-left: 1px;
}
.sel-text {
    background: #1a2c70;
    color: #d8dcf0;
    padding: 0 1px;
    line-height: 11px;
}
.dlg-step {
    display: flex;
    align-items: center;
    height: 15px;
    margin-top: 4.500px;
    padding-left: 3px;
}
.dlg-proc {
    display: flex;
    gap: 7px;
    height: 13px;
    margin-top: 4px;
    padding-left: 3px;
    align-items: center;
}
.dlg-groups {
    display: flex;
    gap: 5px;
    margin-top: 4.500px;
    padding-left: 2px;
    height: 185px;
}
.grp {
    margin: 0;
    padding: 0;
    box-sizing: border-box;
    min-width: 0;
    border: 1px solid #a8a6a0;
    box-shadow: 1px 1px 0 #f2f1ee, inset 1px 1px 0 #f2f1ee;
}
.grp legend {
    padding: 0 2px;
    margin-left: 4px;
    font-weight: 700;
    font-size: 9.500px;
    line-height: 12px;
    letter-spacing: 0;
    color: #444;
}
.grp-cat {
    width: 97px;
    padding-top: 3px;
}
.grp-types {
    width: 184px;
    padding: 4.500px 5px 2px 4px;
}
.radio {
    height: 16.800px;
    display: flex;
    align-items: center;
    padding-left: 5px;
    gap: 4px;
    white-space: nowrap;
}
.radio::before {
    content: "";
    width: 8px;
    height: 8px;
    flex: none;
    box-sizing: border-box;
    border: 1px solid #777;
    border-radius: 50%;
    background: #fff;
}
.radio-on::before {
    background: radial-gradient(circle, #222 0 1.500px, #fff 2px);
}
.radio-off {
    color: #aaa8a2;
}
.radio-off::before {
    background: #d2cfc9;
}
.type-list {
    list-style: none;
    margin: 0;
    padding: 1px;
    height: 165px;
    box-sizing: border-box;
    background: #fff;
    border: 1px solid;
    border-color: #555 #eee #eee #555;
}
.type-list li {
    height: 13.600px;
    line-height: 13.600px;
    padding-left: 2px;
    white-space: nowrap;
}
.type-sel {
    background: #14246c;
    color: #d8dcf0;
}
.dlg-actions {
    display: flex;
    margin-top: 9px;
    padding-left: 43px;
    gap: 86px;
}
.btn {
    width: 59px;
    height: 17px;
    padding: 0;
    font: 9px Roboto, "Liberation Sans", sans-serif;
    color: #333;
    background: #d2cfc9;
    border: 1px solid;
    border-color: #f2f1ee #55544f #55544f #f2f1ee;
}
.btn-default {
    outline: 1px solid #777;
    outline-offset: -1px;
}
.cursor {
    position: absolute;
    left: 169px;
    top: 102px;
}
```
